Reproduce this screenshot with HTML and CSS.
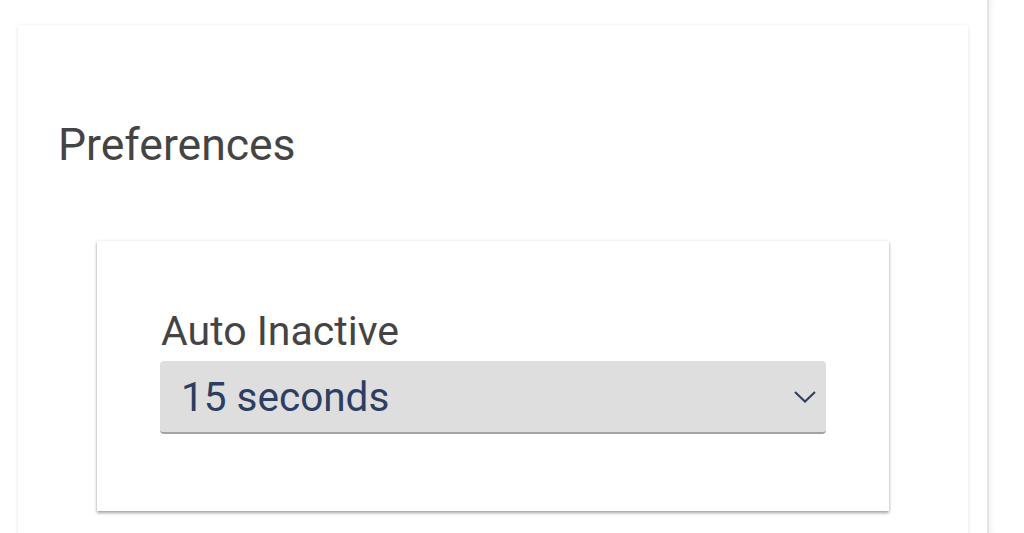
FILE: index.html
```html
<!DOCTYPE html>
<html>
<head>
<meta charset="utf-8">
<link rel="stylesheet" href="styles.css">
</head>
<body>
<div class="layout">
  <main class="main">
    <section class="card">
      <h1 class="title">Preferences</h1>
      <div class="inner">
        <label class="label">Auto Inactive</label>
        <div class="select">
          <span class="value">15 seconds</span>
          <svg class="chev" width="24" height="14" viewBox="0 0 24 14"><polyline points="2,2 12,11.5 22,2" fill="none" stroke="#2d3e63" stroke-width="2"/></svg>
        </div>
      </div>
    </section>
  </main>
  <aside class="side"></aside>
</div>
</body>
</html>
```
FILE: styles.css
```css
html, body {
  margin: 0;
  padding: 0;
  background: #ffffff;
  overflow: hidden;
  height: 533px;
}
body {
  font-family: Roboto, "Liberation Sans", sans-serif;
}
.layout {
  display: flex;
  height: 533px;
  overflow: hidden;
}
.main {
  width: 987px;
  height: 533px;
  flex: none;
  padding: 25px 19px 0 18px;
  box-sizing: border-box;
  overflow: hidden;
}
.card {
  background: #fff;
  box-shadow: 0 1px 4px rgba(0, 0, 0, 0.12);
  padding: 94px 0 0;
  height: 530px;
  box-sizing: border-box;
}
.title {
  margin: 0 0 70px 40px;
  font-weight: 400;
  font-size: 44.5px;
  line-height: 52px;
  color: #444444;
}
.inner {
  margin: 0 79px;
  background: #fff;
  box-shadow: 0 2px 3px rgba(0, 0, 0, 0.35), 0 0 3px rgba(0, 0, 0, 0.08);
  padding: 68px 63px 77px 63px;
}
.label {
  display: block;
  font-size: 41px;
  line-height: 44px;
  color: #444444;
  padding-left: 1px;
  margin-bottom: 8px;
}
.select {
  height: 71px;
  background: #dedede;
  border-radius: 4px;
  border-bottom: 2px solid #a3a3a3;
  display: flex;
  align-items: center;
  padding: 0 9px 0 21px;
}
.value {
  flex: 1;
  font-size: 40.5px;
  line-height: 48px;
  color: #2d3e63;
}
.chev {
  display: block;
}
.side {
  flex: 1;
  border-left: 2px solid #e4e4e4;
  box-shadow: inset 5px 0 6px -4px rgba(0, 0, 0, 0.08);
}
```
